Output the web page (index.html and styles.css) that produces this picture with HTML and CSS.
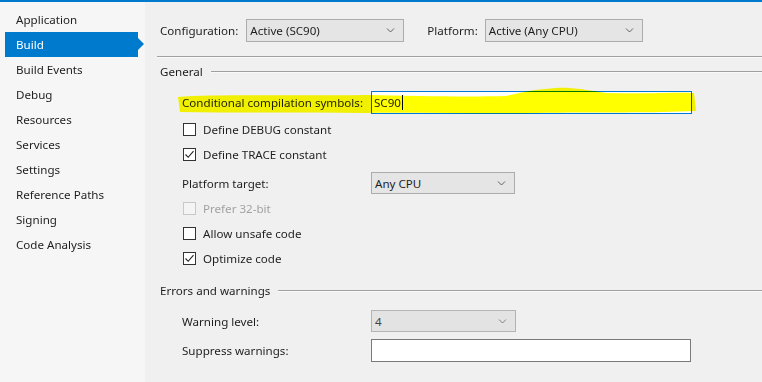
FILE: index.html
```html
<!DOCTYPE html>
<html>
<head>
<meta charset="utf-8">
<link rel="stylesheet" href="styles.css">
</head>
<body>
<div class="topbar"></div>
<div class="app">
  <nav class="sidebar">
    <div class="nav-item">Application</div>
    <div class="nav-item active">Build</div>
    <div class="nav-item">Build Events</div>
    <div class="nav-item">Debug</div>
    <div class="nav-item">Resources</div>
    <div class="nav-item">Services</div>
    <div class="nav-item">Settings</div>
    <div class="nav-item">Reference Paths</div>
    <div class="nav-item">Signing</div>
    <div class="nav-item">Code Analysis</div>
  </nav>
  <main class="main">
    <div class="config-row">
      <span class="config-label">Configuration:</span>
      <div class="select w158"><span>Active (SC90)</span><svg class="chev" width="9" height="5" viewBox="0 0 9 5"><path d="M1 0.5 L4.5 4 L8 0.5" fill="none" stroke="#606060" stroke-width="1"/></svg></div>
      <span class="config-label platform">Platform:</span>
      <div class="select w158"><span>Active (Any CPU)</span><svg class="chev" width="9" height="5" viewBox="0 0 9 5"><path d="M1 0.5 L4.5 4 L8 0.5" fill="none" stroke="#606060" stroke-width="1"/></svg></div>
    </div>
    <div class="sep"></div>

    <div class="group-header g-general"><span>General</span><div class="line"></div></div>

    <div class="row r-cond">
      <span class="label">Conditional compilation symbols:</span>
      <div class="input focused w321"><span>SC90</span><span class="caret"></span></div>
      <svg class="highlight" width="530" height="34" viewBox="0 0 530 34">
        <path d="M2 12 C40 9 120 11 190 10 C240 11 290 12 330 11 C350 6 365 4 380 3 C395 2 410 5 430 8 C470 9 500 7 518 8 L520 26 C480 28 420 27 360 28 C300 29 240 27 190 28 C120 27 60 28 4 27 Z" fill="#ffff00"/>
      </svg>
    </div>

    <div class="row check r-debug"><span class="cb"></span><span>Define DEBUG constant</span></div>
    <div class="row check r-trace"><span class="cb"><svg width="11" height="11" viewBox="0 0 11 11"><path d="M1.5 5.5 L4.2 8.3 L9.5 2.2" fill="none" stroke="#222" stroke-width="1.1"/></svg></span><span>Define TRACE constant</span></div>

    <div class="row r-ptarget">
      <span class="label">Platform target:</span>
      <div class="select w144"><span>Any CPU</span><svg class="chev" width="9" height="5" viewBox="0 0 9 5"><path d="M1 0.5 L4.5 4 L8 0.5" fill="none" stroke="#606060" stroke-width="1"/></svg></div>
    </div>

    <div class="row check disabled r-prefer"><span class="cb"></span><span>Prefer 32-bit</span></div>
    <div class="row check r-unsafe"><span class="cb"></span><span>Allow unsafe code</span></div>
    <div class="row check r-opt"><span class="cb"><svg width="11" height="11" viewBox="0 0 11 11"><path d="M1.5 5.5 L4.2 8.3 L9.5 2.2" fill="none" stroke="#222" stroke-width="1.1"/></svg></span><span>Optimize code</span></div>

    <div class="group-header g-errors"><span>Errors and warnings</span><div class="line"></div></div>

    <div class="row r-warn">
      <span class="label">Warning level:</span>
      <div class="select w145 dim"><span>4</span><svg class="chev" width="9" height="5" viewBox="0 0 9 5"><path d="M1 0.5 L4.5 4 L8 0.5" fill="none" stroke="#808080" stroke-width="1"/></svg></div>
    </div>
    <div class="row r-suppress">
      <span class="label">Suppress warnings:</span>
      <div class="input w320"></div>
    </div>

    <div class="group-header g-treat"><span>Treat warnings as errors</span><div class="line"></div></div>
  </main>
</div>
</body>
</html>
```
FILE: styles.css
```css
* { box-sizing: border-box; }
html, body { margin: 0; padding: 0; }
body {
  width: 762px;
  height: 382px;
  overflow: hidden;
  background: #f0f0f0;
  font-family: "Noto Sans", "Open Sans", sans-serif;
  font-size: 11.6px;
  color: #1e1e1e;
}
.topbar { height: 2px; background: #007acc; }
.app { display: flex; height: 380px; }

.sidebar {
  width: 145px;
  flex: none;
  background: #f6f6f6;
  padding-top: 5px;
}
.nav-item {
  position: relative;
  height: 25px;
  line-height: 25px;
  margin-left: 5px;
  width: 133px;
  padding-left: 11px;
  color: #1e1e1e;
}
.nav-item.active { background: #007acc; color: #fff; }
.nav-item.active::after {
  content: "";
  position: absolute;
  right: -6px;
  top: 6px;
  border-left: 6px solid #007acc;
  border-top: 6.5px solid transparent;
  border-bottom: 6.5px solid transparent;
}

.main { flex: 1; padding-left: 15px; }

.config-row { display: flex; align-items: center; height: 23px; margin-top: 17px; }
.config-label { margin-right: 8px; }
.config-label.platform { margin-left: 23px; margin-right: 7px; }

.select {
  position: relative;
  height: 23px;
  background: #e5e5e5;
  border: 1px solid #acacac;
  display: flex;
  align-items: center;
  padding-left: 3px;
}
.select.dim { background: #e3e3e3; border-color: #b4b4b4; color: #444; }
.chev { position: absolute; right: 8px; top: 8px; }
.r-ptarget .select, .r-warn .select { height: 22px; }
.r-ptarget .chev, .r-warn .chev { top: 8px; }

.w158 { width: 158px; }
.w144 { width: 144px; }
.w145 { width: 145px; }
.w321 { width: 321px; }
.w320 { width: 320px; }

.input {
  height: 23px;
  background: #fff;
  border: 1px solid #7a7a7a;
  display: flex;
  align-items: center;
  padding-left: 2px;
}
.input.focused { border-color: #0078d7; }
.caret { display: inline-block; width: 1px; height: 15px; background: #000; margin-left: 1px; }

.sep {
  margin-top: 14px;
  margin-left: -3px;
  height: 2px;
  border-top: 1px solid #a0a0a0;
  border-bottom: 1px solid #fafafa;
}

.group-header { display: flex; align-items: center; height: 16px; }
.group-header .line {
  flex: 1;
  margin-left: 8px;
  height: 2px;
  border-top: 1px solid #a0a0a0;
  border-bottom: 1px solid #fafafa;
  margin-top: 1px;
}
.g-general { margin-top: 5px; }
.g-errors { margin-top: 14px; }
.g-treat { margin-top: 18px; }

.row { display: flex; align-items: center; margin-left: 22px; }
.row .label { width: 189px; flex: none; }
.r-cond { position: relative; height: 23px; margin-top: 12px; }
.r-ptarget { height: 22px; margin-top: 8px; }
.r-warn { height: 22px; margin-top: 12px; }
.r-suppress { height: 23px; margin-top: 7px; }

.highlight {
  position: absolute;
  left: -6px;
  top: -6px;
  mix-blend-mode: multiply;
  pointer-events: none;
}

.check { height: 20px; margin-top: 5px; }
.r-prefer { margin-top: 4px; }
.cb {
  width: 13px;
  height: 13px;
  border: 1px solid #333;
  background: #fff;
  margin-left: 1px;
  margin-right: 7px;
  display: flex;
  align-items: center;
  justify-content: center;
  flex: none;
}
.disabled { color: #a2a2a2; }
.disabled .cb { border-color: #c8c8c8; background: #f4f4f4; }
```
